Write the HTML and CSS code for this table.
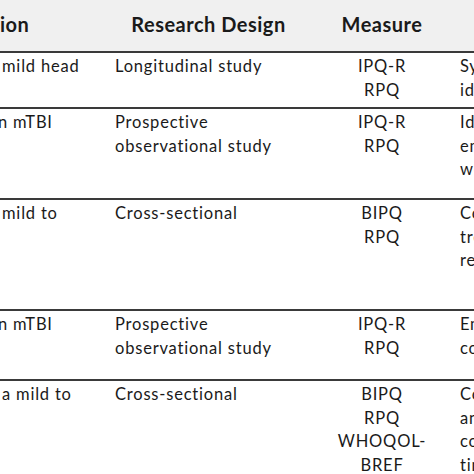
FILE: index.html
```html
<!DOCTYPE html>
<html>
<head>
<meta charset="utf-8">
<link rel="stylesheet" href="styles.css">
</head>
<body>
<div class="table">
  <div class="row head">
    <div class="c1">ion</div>
    <div class="c2 center">Research Design</div>
    <div class="c3">Measure</div>
    <div class="c4"></div>
  </div>
  <div class="row r1">
    <div class="c1">mild head</div>
    <div class="c2">Longitudinal study</div>
    <div class="c3">IPQ-R<br>RPQ</div>
    <div class="c4">Symptom severity<br>identity</div>
  </div>
  <div class="row r2">
    <div class="c1 cut">n mTBI</div>
    <div class="c2">Prospective<br>observational study</div>
    <div class="c3">IPQ-R<br>RPQ</div>
    <div class="c4">Identity<br>emotional<br>worry</div>
  </div>
  <div class="row r3">
    <div class="c1">mild to</div>
    <div class="c2">Cross-sectional</div>
    <div class="c3">BIPQ<br>RPQ</div>
    <div class="c4">Consequences<br>treatment<br>recovery</div>
  </div>
  <div class="row r4">
    <div class="c1 cut">n mTBI</div>
    <div class="c2">Prospective<br>observational study</div>
    <div class="c3">IPQ-R<br>RPQ</div>
    <div class="c4">Emotional<br>concern</div>
  </div>
  <div class="row r5">
    <div class="c1">a mild to</div>
    <div class="c2">Cross-sectional</div>
    <div class="c3">BIPQ<br>RPQ<br>WHOQOL-<br>BREF</div>
    <div class="c4">Consequences<br>and<br>control<br>timeline</div>
  </div>
</div>
</body>
</html>
```
FILE: styles.css
```css
html, body {
  margin: 0;
  padding: 0;
  background: #ffffff;
  overflow: hidden;
}
body {
  width: 474px;
  height: 474px;
  font-family: Lato, "Liberation Sans", sans-serif;
  color: #1a1a1a;
}
.table {
  width: 652px;
}
.row {
  display: grid;
  grid-template-columns: 105px 207px 140px 200px;
  box-sizing: border-box;
  border-bottom: 2px solid #3a3a3a;
  font-size: 16.5px;
  letter-spacing: 0.8px;
  line-height: 23.5px;
}
.row > div {
  white-space: nowrap;
  overflow: hidden;
  padding-top: 2px;
}
.head {
  height: 53px;
  background: #f0f0f0;
  font-weight: 700;
  font-size: 20px;
  letter-spacing: 0.5px;
  line-height: 24px;
}
.head > div {
  padding-top: 12px;
}
.r1 { height: 56px; }
.r2 { height: 91px; }
.r3 { height: 111px; }
.r4 { height: 70px; }
.r5 { height: 120px; border-bottom: none; }
.c1 {
  padding-left: 2px;
}
.head .c1 {
  padding-left: 0;
}
.cut {
  text-indent: -4px;
}
.c2 {
  padding-left: 10px;
}
.c2.center {
  padding-left: 0;
  text-align: center;
}
.c3 {
  text-align: center;
}
.c4 {
  padding-left: 8px;
}
```
